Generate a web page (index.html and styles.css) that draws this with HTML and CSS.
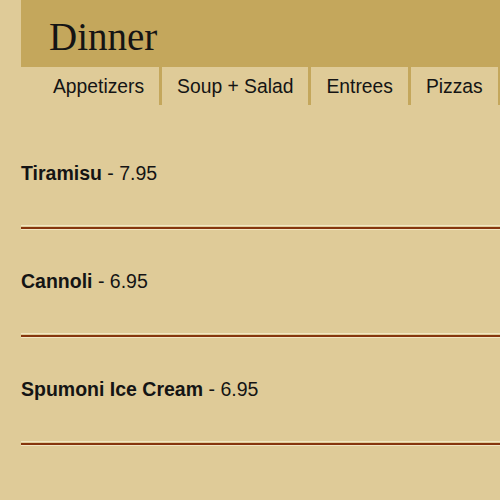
FILE: index.html
```html
<!DOCTYPE html>
<html>
<head>
<meta charset="utf-8">
<link rel="stylesheet" href="styles.css">
</head>
<body>
<div class="page">
  <header class="header">
    <h1 class="title">Dinner</h1>
  </header>
  <nav class="tabs">
    <div class="tab">Appetizers</div>
    <div class="tab">Soup + Salad</div>
    <div class="tab">Entrees</div>
    <div class="tab">Pizzas</div>
  </nav>
  <div class="items">
    <div class="item"><b class="name">Tiramisu</b> - 7.95</div>
    <hr class="rule">
    <div class="item"><b class="name">Cannoli</b> - 6.95</div>
    <hr class="rule">
    <div class="item"><b class="name">Spumoni Ice Cream</b> - 6.95</div>
    <hr class="rule">
  </div>
</div>
</body>
</html>
```
FILE: styles.css
```css
html, body {
  margin: 0;
  padding: 0;
  background: #dfcb98;
  overflow: hidden;
}
.page {
  padding-left: 21px;
  font-family: "Liberation Sans", Arial, sans-serif;
  color: #141414;
}
.header {
  height: 67px;
  background: #c4a75c;
  padding-left: 28px;
  box-sizing: border-box;
  padding-top: 17px;
}
.title {
  margin: 0;
  font-family: "Liberation Serif", "Times New Roman", serif;
  font-weight: normal;
  font-size: 39px;
  line-height: 39px;
}
.tabs {
  display: flex;
  padding-left: 17px;
  height: 38px;
}
.tab {
  font-size: 19.3px;
  line-height: 37px;
  padding: 1px 15px 0;
  border-right: 3px solid #c4a75c;
  white-space: nowrap;
}
.items {
  padding-top: 18px;
}
.item {
  font-size: 19.5px;
  line-height: 22px;
  padding: 39px 0 41px;
}
.name {
  font-weight: bold;
}
.rule {
  margin: 0;
  border: 0;
  height: 6px;
  background: linear-gradient(to bottom,
    #f2e6c2 0, #f2e6c2 1px,
    transparent 1px, transparent 2px,
    #86350d 2px, #86350d 4px,
    #f2e6c2 4px, #f2e6c2 5px,
    transparent 5px);
}
```
